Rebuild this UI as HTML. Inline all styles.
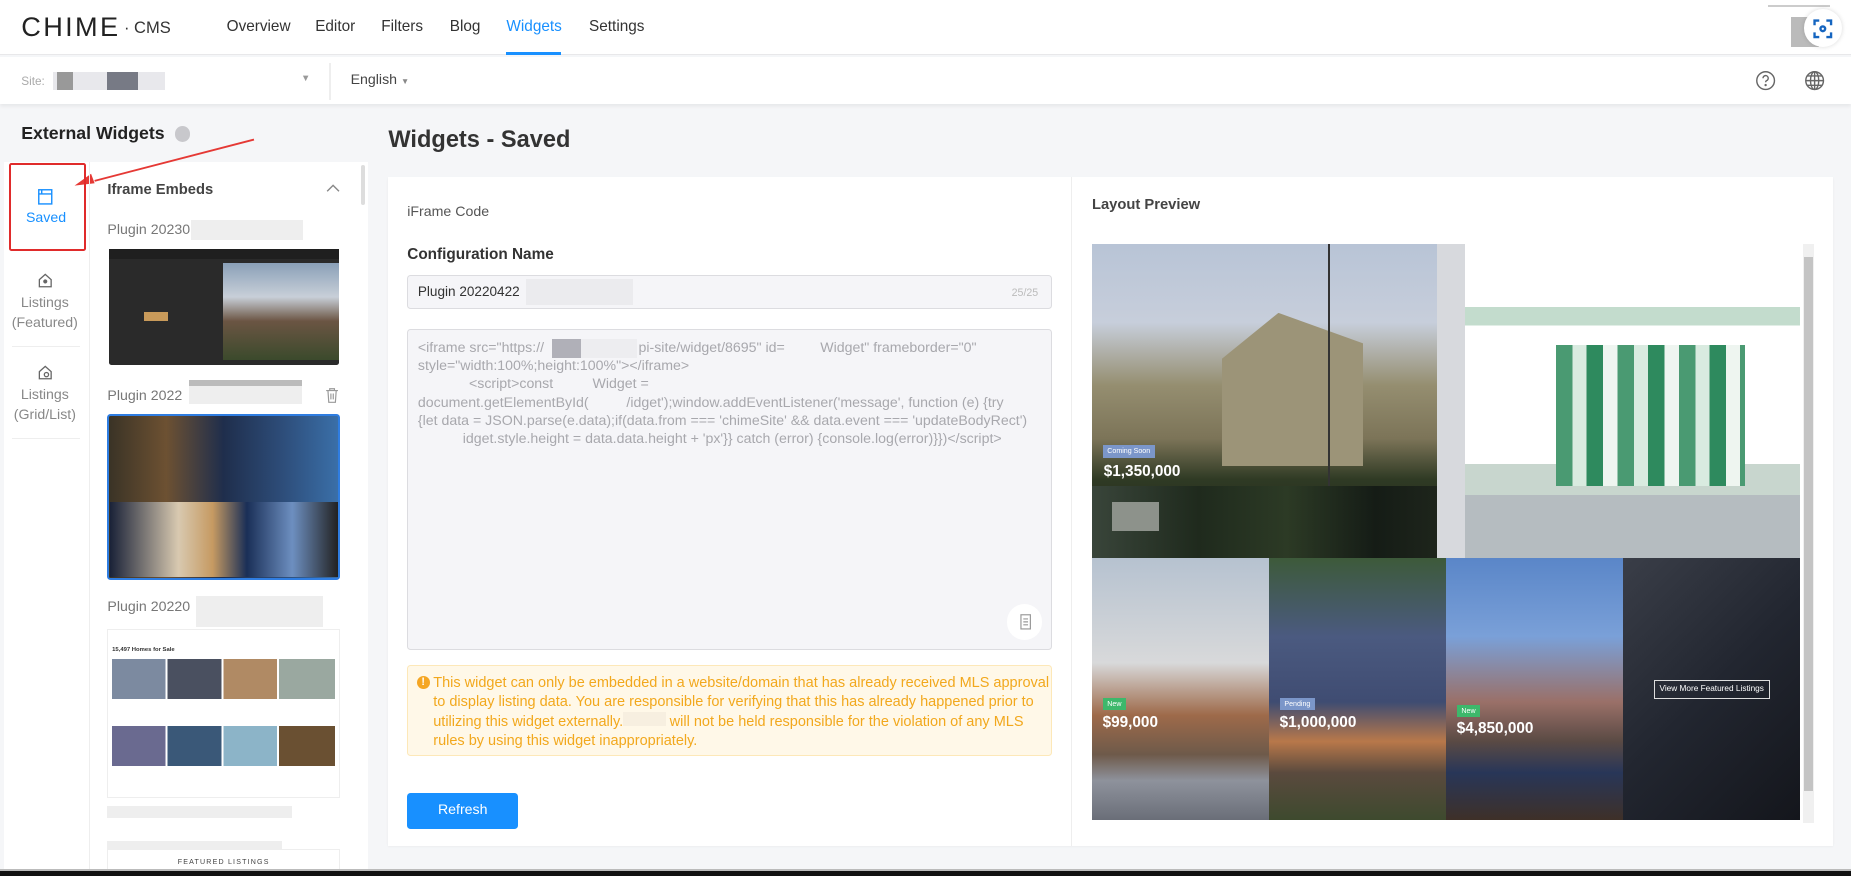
<!DOCTYPE html>
<html><head><meta charset="utf-8"><style>
*{box-sizing:border-box;margin:0;padding:0}
html,body{width:1851px;height:876px;overflow:hidden;background:#fff}
#w{zoom:1.18048;width:1568px;height:742px;position:relative;font-family:"Liberation Sans",sans-serif;background:#f5f6f8;overflow:hidden}
.a{position:absolute}
.nav{font-size:13px;color:#333;top:15px}
.blur{position:absolute;background:#e3e3e6}
.code{font-size:12px;color:#a8a8ad;line-height:15.5px}
.warn{font-size:12.3px;color:#f2a81d;line-height:16px}
.price{color:#fff;font-weight:bold;font-size:13px}
</style></head><body><div id="w">
<!-- top nav -->
<div class="a" style="left:0;top:0;width:1568px;height:47px;background:#fff;border-bottom:1px solid #e8e8ea"></div>
<div class="a" style="left:18px;top:9px;font-size:23px;letter-spacing:2px;color:#222">CHIME</div>
<div class="a" style="left:105px;top:15px;font-size:14px;color:#333">· CMS</div>
<div class="a nav" style="left:192px">Overview</div>
<div class="a nav" style="left:267px">Editor</div>
<div class="a nav" style="left:323px">Filters</div>
<div class="a nav" style="left:381px">Blog</div>
<div class="a nav" style="left:429px;color:#1890ff">Widgets</div>
<div class="a" style="left:429px;top:44px;width:46px;height:3px;background:#1890ff"></div>
<div class="a nav" style="left:499px">Settings</div>
<div class="a" style="left:1498px;top:4px;width:52px;height:2px;background:#ccc"></div>
<div class="a" style="left:1517px;top:14px;width:24px;height:26px;background:#bbb"></div>
<div class="a" style="left:1528px;top:8px;width:32px;height:32px;border-radius:16px;background:#fff;box-shadow:0 0 4px rgba(0,0,0,.15)"></div>
<svg class="a" style="left:1534px;top:14px" width="20" height="20" viewBox="0 0 20 20" fill="none" stroke="#1565c0" stroke-width="2"><path d="M3 7V3h4M13 3h4v4M17 13v4h-4M7 17H3v-4"/><circle cx="10" cy="10" r="2"/></svg>
<!-- second bar -->
<div class="a" style="left:0;top:48px;width:1568px;height:40px;background:#fff;box-shadow:0 2px 3px rgba(0,0,0,.06)"></div>
<div class="a" style="left:18px;top:63px;font-size:10px;color:#aaa">Site:</div>
<div class="blur" style="left:45px;top:61px;width:95px;height:15px;background:#e8e8ec"></div>
<div class="blur" style="left:91px;top:61px;width:26px;height:15px;background:#777a85"></div>
<div class="blur" style="left:48px;top:61px;width:14px;height:15px;background:#999"></div>
<div class="a" style="left:255px;top:62px;font-size:8px;color:#999">▼</div>
<div class="a" style="left:279px;top:53px;width:1px;height:32px;background:#eee"></div>
<div class="a" style="left:297px;top:61px;font-size:12px;color:#444">English <span style="font-size:7px;color:#888">▼</span></div>
<svg class="a" style="left:1487px;top:59px" width="18" height="18" viewBox="0 0 18 18" fill="none" stroke="#666" stroke-width="1.2"><circle cx="9" cy="9" r="7.5"/><path d="M6.8 7a2.2 2.2 0 1 1 3 2c-.6.3-.8.7-.8 1.4"/><circle cx="9" cy="12.8" r=".4" fill="#666"/></svg>
<svg class="a" style="left:1528px;top:59px" width="18" height="18" viewBox="0 0 18 18" fill="none" stroke="#666" stroke-width="1.2"><circle cx="9" cy="9" r="7.5"/><ellipse cx="9" cy="9" rx="3.5" ry="7.5"/><path d="M1.5 9h15M9 1.5v15M3 5h12M3 13h12"/></svg>
<!-- left panel -->
<div class="a" style="left:18px;top:104px;font-size:15px;font-weight:bold;color:#222">External Widgets</div>
<div class="a" style="left:148px;top:107px;width:13px;height:13px;border-radius:7px;background:#c8c8cc"></div>
<div class="a" style="left:3px;top:137px;width:309px;height:605px;background:#fff"></div>
<svg class="a" style="left:60px;top:115px" width="160" height="45"><path d="M155 3L20 38" stroke="#e53935" stroke-width="1.6"/><path d="M3 42l14-10 3 8z" fill="#e53935"/></svg>
<div class="a" style="left:75px;top:137px;width:1px;height:605px;background:#eee"></div>
<div class="a" style="left:8px;top:138px;width:65px;height:75px;border:2px solid #e02b2b;border-radius:2px"></div>
<svg class="a" style="left:31px;top:159px" width="14" height="15" viewBox="0 0 14 15" fill="none" stroke="#1890ff" stroke-width="1.2"><rect x="1.5" y="1.5" width="11" height="12"/><path d="M1.5 5h11M4 1.5v3"/></svg>
<div class="a" style="left:22px;top:178px;font-size:12px;color:#1890ff">Saved</div>
<svg class="a" style="left:31px;top:230px" width="14" height="14" viewBox="0 0 14 14" fill="none" stroke="#666" stroke-width="1.1"><path d="M2 6.5L7 2l5 4.5V12.5H2z"/><circle cx="7" cy="8" r="1.2" fill="#666"/></svg>
<div class="a" style="left:10px;top:248px;width:56px;text-align:center;font-size:12px;color:#888;line-height:17px">Listings<br>(Featured)</div>
<div class="a" style="left:10px;top:293px;width:58px;height:1px;background:#eee"></div>
<svg class="a" style="left:31px;top:308px" width="14" height="14" viewBox="0 0 14 14" fill="none" stroke="#666" stroke-width="1.1"><path d="M2 6.5L7 2l5 4.5V12.5H2z"/><circle cx="8" cy="9" r="1.8"/></svg>
<div class="a" style="left:8px;top:326px;width:60px;text-align:center;font-size:12px;color:#888;line-height:17px">Listings<br>(Grid/List)</div>
<div class="a" style="left:10px;top:371px;width:58px;height:1px;background:#eee"></div>
<div class="a" style="left:91px;top:154px;font-size:12.5px;font-weight:bold;color:#444">Iframe Embeds</div>
<svg class="a" style="left:276px;top:155px" width="12" height="9"><path d="M1 7l5-5 5 5" fill="none" stroke="#888" stroke-width="1.2"/></svg>
<div class="a" style="left:306px;top:140px;width:3px;height:34px;background:#ddd;border-radius:2px"></div>
<div class="a" style="left:91px;top:188px;font-size:12px;color:#777">Plugin 20230</div>
<div class="blur" style="left:162px;top:186px;width:95px;height:17px;background:#eee"></div>
<div class="a" style="left:92px;top:211px;width:195px;height:98px;background:#2a2a2a;border-radius:2px"></div>
<div class="a" style="left:92px;top:211px;width:195px;height:8px;background:#1f1f1f"></div>
<div class="a" style="left:189px;top:223px;width:98px;height:82px;background:linear-gradient(180deg,#8aa0b8,#c8cfd8 35%,#6b5543 60%,#3b4a2c)"></div>
<div class="a" style="left:122px;top:264px;width:20px;height:8px;background:#c89a5a"></div>
<div class="a" style="left:91px;top:329px;font-size:12px;color:#777">Plugin 2022</div>
<div class="blur" style="left:160px;top:322px;width:96px;height:20px;background:#eee"></div>
<div class="blur" style="left:160px;top:322px;width:96px;height:5px;background:#bbb"></div>
<svg class="a" style="left:275px;top:328px" width="12" height="14" viewBox="0 0 12 14" fill="none" stroke="#999" stroke-width="1"><path d="M1 3h10M4 3V1.5h4V3M2.5 3l.7 10h5.6l.7-10M5 5.5v5M7 5.5v5"/></svg>
<div class="a" style="left:91px;top:351px;width:197px;height:140px;border:2px solid #2f7de1;border-radius:3px;background:linear-gradient(90deg,#3a3326 0,#6d5132 25%,#1f2e4c 50%,#2d4c78 75%,#3a6fa8)"></div>
<div class="a" style="left:93px;top:425px;width:193px;height:64px;background:linear-gradient(90deg,#1a2238,#d8c9b0 30%,#c69a62 45%,#1a2f57 60%,#6d8fc0 80%,#222)"></div>
<div class="a" style="left:91px;top:507px;font-size:12px;color:#777">Plugin 20220</div>
<div class="blur" style="left:166px;top:505px;width:108px;height:26px;background:#eee"></div>
<div class="a" style="left:91px;top:533px;width:197px;height:143px;background:#fff;border:1px solid #eee"></div>
<div class="a" style="left:95px;top:548px;font-size:5px;font-weight:bold;color:#333">15,497 Homes for Sale</div>
<div class="a" style="left:95px;top:558px;width:189px;height:34px;background:linear-gradient(90deg,#7c8aa0 0 24%,#fff 24% 25%,#4a5060 25% 49%,#fff 49% 50%,#b08a64 50% 74%,#fff 74% 75%,#9aa8a0 75%)"></div>
<div class="a" style="left:95px;top:615px;width:189px;height:34px;background:linear-gradient(90deg,#6a6a90 0 24%,#fff 24% 25%,#3a5878 25% 49%,#fff 49% 50%,#8cb4c8 50% 74%,#fff 74% 75%,#6a5032 75%)"></div>
<div class="blur" style="left:91px;top:683px;width:156px;height:10px;background:#eee"></div>
<div class="blur" style="left:91px;top:712px;width:148px;height:8px;background:#eee"></div>
<div class="a" style="left:91px;top:719px;width:197px;height:23px;background:#fff;border:1px solid #eee;font-size:6px;letter-spacing:1px;text-align:center;padding-top:7px;color:#444">FEATURED LISTINGS</div>
<!-- main -->
<div class="a" style="left:329px;top:108px;font-size:20px;font-weight:bold;color:#333">Widgets - Saved</div>
<div class="a" style="left:329px;top:150px;width:1224px;height:567px;background:#fff;box-shadow:0 1px 2px rgba(0,0,0,.05)"></div>
<div class="a" style="left:907px;top:150px;width:1px;height:567px;background:#eee"></div>
<div class="a" style="left:345px;top:173px;font-size:12px;color:#555">iFrame Code</div>
<div class="a" style="left:345px;top:208px;font-size:13px;font-weight:bold;color:#333">Configuration Name</div>
<div class="a" style="left:345px;top:233px;width:546px;height:29px;background:#f5f5f8;border:1px solid #dcdce0;border-radius:3px"></div>
<div class="a" style="left:354px;top:241px;font-size:11.5px;color:#333">Plugin 20220422</div>
<div class="blur" style="left:446px;top:236px;width:90px;height:22px;background:#ebebee"></div>
<div class="a" style="left:857px;top:243px;font-size:9px;color:#bbb">25/25</div>
<div class="a" style="left:345px;top:279px;width:546px;height:272px;background:#f5f5f8;border:1px solid #dcdce0;border-radius:3px"></div>
<div class="a code" style="left:354px;top:287px;width:535px">&lt;iframe src="https://<span style="display:inline-block;width:80px"></span>pi-site/widget/8695" id=<span style="display:inline-block;width:30px"></span>Widget" frameborder="0"<br>style="width:100%;height:100%"&gt;&lt;/iframe&gt;<br>&nbsp;&nbsp;&nbsp;&nbsp;&nbsp;&nbsp;&nbsp;&nbsp;&nbsp;&nbsp;&nbsp;&nbsp;&nbsp;&lt;script&gt;const <span style="display:inline-block;width:30px"></span>Widget =<br>document.getElementById(<span style="display:inline-block;width:32px"></span>/idget');window.addEventListener('message', function (e) {try<br>{let data = JSON.parse(e.data);if(data.from === 'chimeSite' &amp;&amp; data.event === 'updateBodyRect')<br><span style="display:inline-block;width:38px"></span>idget.style.height = data.data.height + 'px'}} catch (error) {console.log(error)}})&lt;/script&gt;</div>
<div class="blur" style="left:468px;top:287px;width:24px;height:16px;background:#b0b0b8"></div>
<div class="blur" style="left:492px;top:287px;width:48px;height:16px;background:#ededf0"></div>
<div class="a" style="left:853px;top:512px;width:30px;height:30px;border-radius:15px;background:#fff"></div>
<svg class="a" style="left:862px;top:519px" width="12" height="15" viewBox="0 0 12 15" fill="none" stroke="#999" stroke-width="1"><rect x="2.5" y="1.5" width="8" height="12"/><path d="M4.5 5h4M4.5 7.5h4M4.5 10h4"/></svg>
<div class="a" style="left:345px;top:563px;width:546px;height:77px;background:#fff8e8;border:1px solid #fde8b8;border-radius:3px"></div>
<div class="a" style="left:353px;top:573px;width:11px;height:11px;border-radius:6px;background:#f5a623;color:#fff;font-size:9px;font-weight:bold;text-align:center;line-height:11px">!</div>
<div class="a warn" style="left:367px;top:571px;width:524px">This widget can only be embedded in a website/domain that has already received MLS approval to display listing data. You are responsible for verifying that this has already happened prior to utilizing this widget externally.<span style="display:inline-block;width:36px;height:12px;background:#f7efe0"></span> will not be held responsible for the violation of any MLS rules by using this widget inappropriately.</div>
<div class="a" style="left:345px;top:672px;width:94px;height:30px;background:#1890ff;border-radius:3px;color:#fff;font-size:12px;text-align:center;line-height:30px">Refresh</div>
<!-- preview -->
<div class="a" style="left:925px;top:167px;font-size:12.5px;font-weight:bold;color:#444">Layout Preview</div>
<div class="a" style="left:925px;top:207px;width:300px;height:266px;background:linear-gradient(180deg,#b8c4d6 0,#c7cedb 25%,#958e70 45%,#7c7458 62%,#2f3a24 75%,#1c2418 100%)"></div>
<div class="a" style="left:1035px;top:265px;width:120px;height:130px;background:#9c9478;clip-path:polygon(0 30%,40% 0,100% 20%,100% 100%,0 100%)"></div>
<div class="a" style="left:1125px;top:207px;width:2px;height:210px;background:#333"></div>
<div class="a" style="left:934px;top:377px;background:#7b96c9"><span style="font-size:6px;color:#fff;padding:2px 4px;display:block">Coming Soon</span></div>
<div class="a price" style="left:935px;top:392px">$1,350,000</div>
<div class="a" style="left:925px;top:412px;width:300px;height:61px;background:linear-gradient(90deg,#39453a,#1f2a1d 30%,#2c3a25 55%,#151c16 80%,#1f261c)"></div>
<div class="a" style="left:942px;top:425px;width:40px;height:25px;background:#8d928b"></div>
<div class="a" style="left:1217px;top:207px;width:24px;height:266px;background:#d7d9dd"></div>
<div class="a" style="left:1241px;top:207px;width:284px;height:266px;background:linear-gradient(180deg,#fff 0 20%,#c3dccd 20% 26%,#fff 26%,#fff 70%,#c8d6ce 70% 80%,#b5bcc0 80%)"></div>
<div class="a" style="left:1318px;top:292px;width:160px;height:120px;background:repeating-linear-gradient(90deg,#4a9a72 0 14px,#d9ebe0 14px 26px,#2e8a5e 26px 40px,#eef5f0 40px 52px)"></div>
<div class="a" style="left:925px;top:473px;width:150px;height:222px;background:linear-gradient(180deg,#b6c2d0,#d8d9da 40%,#9e6a4a 60%,#6e5a4a 75%,#8e929c 85%,#6a6e78)"></div>
<div class="a" style="left:1075px;top:473px;width:150px;height:222px;background:linear-gradient(180deg,#3d5a3a,#4b5a80 30%,#3f4c72 55%,#b8784a 70%,#5a4a3e 82%,#3e4a2e)"></div>
<div class="a" style="left:1225px;top:473px;width:150px;height:222px;background:linear-gradient(180deg,#5a86c8,#7aa0d8 30%,#9a7068 55%,#5a4a44 70%,#283658 82%,#3e3028)"></div>
<div class="a" style="left:1375px;top:473px;width:150px;height:222px;background:linear-gradient(135deg,#3a3e48,#222630 50%,#14161c)"></div>
<div class="a" style="left:1401px;top:576px;width:98px;height:16px;border:1px solid #ddd;color:#fff;font-size:7px;text-align:center;line-height:14px">View More Featured Listings</div>
<div class="a" style="left:934px;top:591px;font-size:6px;color:#fff;background:#3db86b;padding:2px 4px">New</div>
<div class="a" style="left:1084px;top:591px;font-size:6px;color:#fff;background:#7b96c9;padding:2px 4px">Pending</div>
<div class="a" style="left:1234px;top:597px;font-size:6px;color:#fff;background:#3db86b;padding:2px 4px">New</div>
<div class="a price" style="left:934px;top:605px">$99,000</div>
<div class="a price" style="left:1084px;top:605px">$1,000,000</div>
<div class="a price" style="left:1234px;top:610px">$4,850,000</div>
<div class="a" style="left:1527px;top:207px;width:10px;height:490px;background:#f0f0f0"></div>
<div class="a" style="left:1528px;top:218px;width:8px;height:452px;background:#c4c4c4"></div>
<div class="a" style="left:0;top:736px;width:1568px;height:2px;background:#bbb"></div>
<div class="a" style="left:0;top:738px;width:1568px;height:4px;background:#111"></div>
</div></body></html>
